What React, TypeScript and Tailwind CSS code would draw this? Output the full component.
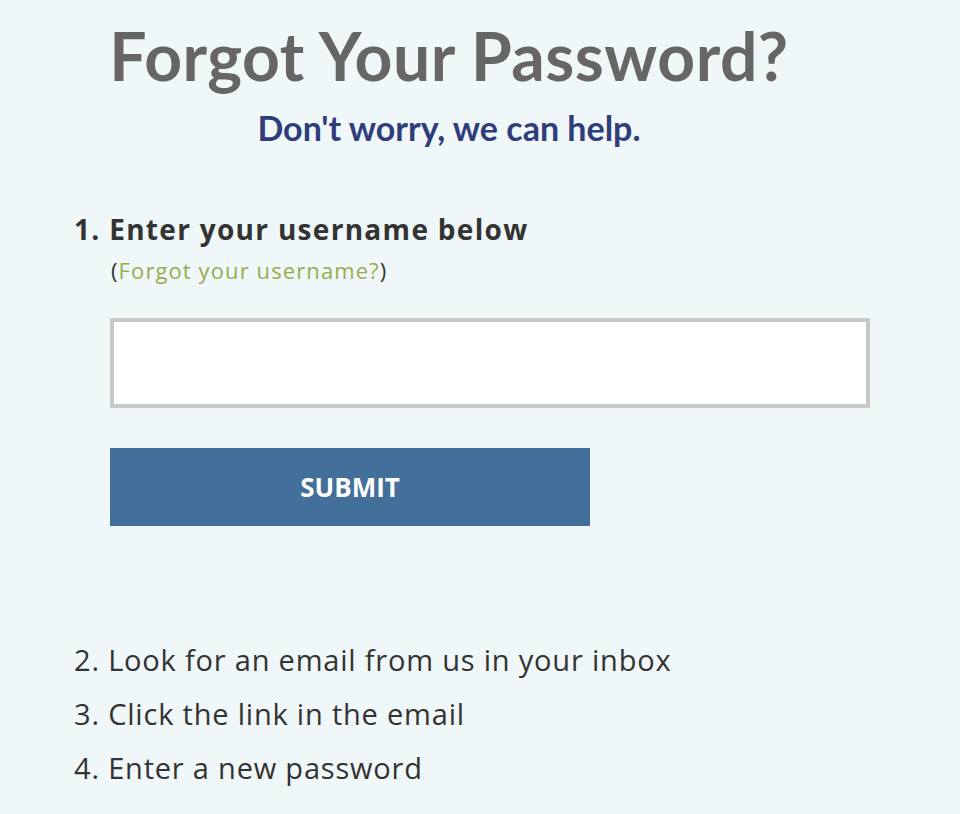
export default function App() {
  return (
    <div className="min-h-[814px] w-[960px] bg-[#eff7f9] text-[#333]" style={{ fontFamily: '"Open Sans", Lato, sans-serif' }}>
      {/* Header */}
      <div className="w-[898px] pt-[18px] text-center" style={{ fontFamily: 'Lato, sans-serif' }}>
        <h1 className="text-[66px] font-bold leading-[76px] tracking-[0.5px] text-[#666]">Forgot Your Password?</h1>
        <p className="mt-[16px] text-[34px] font-bold leading-[36px] text-[#2f3d7b]">Don't worry, we can help.</p>
      </div>

      {/* Step 1 */}
      <div className="pl-[74px] pt-[66px]">
        <h2 className="text-[28px] font-bold leading-[34px] tracking-[1.3px]">1. Enter your username below</h2>
        <p className="pl-[37px] pt-[10px] text-[22px] leading-[28px] tracking-[1.1px]">
          (<a href="#" className="text-[#9aab4f]">Forgot your username?</a>)
        </p>

        <div className="pl-[36px] pt-[34px]">
          <input
            type="text"
            className="block h-[90px] w-[760px] border-[4px] border-[#c8c8c8] bg-white px-4 text-xl outline-none"
          />
          <button className="mt-[40px] flex h-[78px] w-[480px] items-center justify-center bg-[#436f9b] text-[26px] font-bold uppercase text-white">
            Submit
          </button>
        </div>
      </div>

      {/* Remaining steps */}
      <ol className="pl-[74px] pt-[107px] text-[29px] leading-[54px] tracking-[0.8px]">
        <li>2. Look for an email from us in your inbox</li>
        <li>3. Click the link in the email</li>
        <li>4. Enter a new password</li>
      </ol>
    </div>
  )
}
